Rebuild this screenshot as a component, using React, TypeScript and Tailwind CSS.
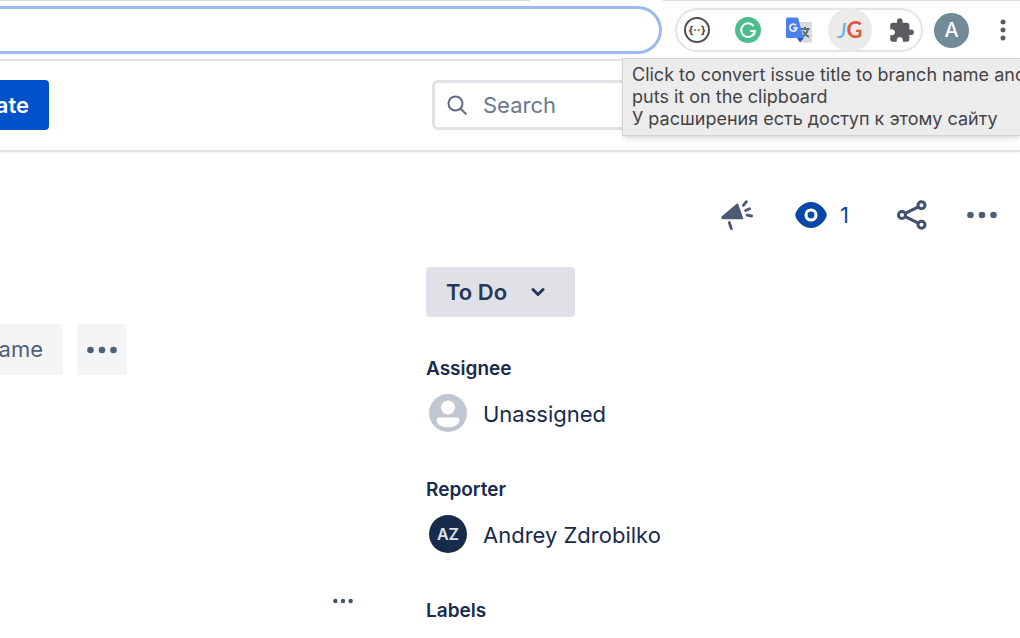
import React from 'react';
import { MdExtension } from 'react-icons/md';

const GrammarIcon = () => (
  <svg viewBox="0 0 26 26" className="h-[26px] w-[26px]" fill="none">
    <circle cx="13" cy="13" r="13" fill="#4cbd8e" />
    <path d="M18.6 9.2A6.8 6.8 0 1 0 19.8 14h-4.6" stroke="#fff" strokeWidth="2" />
    <path d="M19.4 13.6v4.6" stroke="#fff" strokeWidth="1.6" />
  </svg>
);

const TranslateIcon = () => (
  <svg viewBox="0 0 26 26" className="h-[26px] w-[26px]" fill="none">
    <path d="M10 5h16v20.500H15z" fill="#d9dadb" />
    <path d="M14.500 12h9M19 10v2M22 12c-.8 3.500-3 6-6 8M17 14c1.200 2.500 3 4.500 6 6" stroke="#5c7080" strokeWidth="2" />
    <path d="M11 21h7l-4 4.500z" fill="#3a53b5" />
    <path d="M1.500.5H12l5.500 20.500h-16A1.500 1.500 0 0 1 0 19.500V2A1.500 1.500 0 0 1 1.500.5z" fill="#4a80e8" />
    <path d="M10 8.400A3.500 3.500 0 1 0 10.800 11H7.500" stroke="#e4edfc" strokeWidth="1.800" />
  </svg>
);

const MegaphoneIcon = () => (
  <svg viewBox="0 0 32 32" className="h-8 w-8" fill="none" stroke="#4c5a76" strokeWidth="2.800" strokeLinecap="round">
    <path d="M16.500 5.200 21.500 19.500H2a1 1 0 0 1-.7-1.700z" fill="#4c5a76" stroke="#4c5a76" strokeWidth="1.500" strokeLinejoin="round" />
    <path d="m8.300 23.500 2 6M22.400 6.400l3-3.700M24.600 11.500l4-1.800M26 16.200l4.600.8" />
  </svg>
);

const EyeIcon = () => (
  <svg viewBox="0 0 32 26" className="h-[26px] w-8">
    <path d="M16 0C8.500 0 2.600 6 .6 11.200a5 5 0 0 0 0 3.600C2.600 20 8.500 26 16 26s13.400-6 15.400-11.200a5 5 0 0 0 0-3.600C29.400 6 23.500 0 16 0z" fill="#0747a6" />
    <circle cx="16" cy="13" r="5" fill="#0747a6" stroke="#fff" strokeWidth="3.200" />
  </svg>
);

const ShareIcon = () => (
  <svg viewBox="0 0 30 30" className="h-[30px] w-[30px]" fill="none" stroke="#42526e" strokeWidth="3">
    <circle cx="5" cy="15" r="3.500" />
    <circle cx="24.500" cy="5.200" r="3.500" />
    <circle cx="24.500" cy="24.800" r="3.500" />
    <path d="m8.200 13.400 13.200-6.600M8.200 16.600l13.200 6.600" />
  </svg>
);

const DotsIcon = ({ className }: { className: string }) => (
  <svg viewBox="0 0 30 8" className={className} fill="currentColor">
    <circle cx="3.500" cy="4" r="3.300" />
    <circle cx="15" cy="4" r="3.300" />
    <circle cx="26.500" cy="4" r="3.300" />
  </svg>
);

const PersonIcon = () => (
  <svg viewBox="0 0 38 38" className="h-[38px] w-[38px]">
    <circle cx="19" cy="19" r="19" fill="#c1c7d0" />
    <circle cx="19" cy="13.500" r="7" fill="#fff" />
    <path d="M7.500 26a2.500 2.500 0 0 1 2.500-2.500h18a2.500 2.500 0 0 1 2.500 2.500c0 4-5 7.300-11.500 7.300S7.500 30 7.500 26z" fill="#fff" />
  </svg>
);

const extensions = [
  {
    name: 'JSON viewer',
    icon: (
      <span className="flex h-[26px] w-[26px] items-center justify-center rounded-full border-2 border-[#505050] text-[11px] leading-none font-bold text-[#444]">
        {'{··}'}
      </span>
    ),
  },
  { name: 'Grammar', icon: <GrammarIcon /> },
  { name: 'Translate', icon: <TranslateIcon /> },
  {
    name: 'Branch name',
    active: true,
    icon: (
      <span className="flex items-center text-[22px] leading-none">
        <span className="font-[Lato] text-[#62b0e8] italic">J</span>
        <span className="font-[Lato] font-bold text-[#e2583e]">G</span>
      </span>
    ),
  },
  { name: 'Extensions', icon: <MdExtension size={27} color="#5a5c62" /> },
];

const BrowserBar = () => (
  <div className="relative">
    {/* Bottom edge of the tab strip */}
    <div className="flex h-px justify-between">
      <div className="w-[52%] bg-[#dcdce0]" />
      <div className="w-[35%] bg-[#dcdce0]" />
    </div>

    <div className="flex h-[60px] items-center border-b-2 border-[#e2e2e5] pr-[5px]">
      <input
        aria-label="Address"
        className="h-12 min-w-0 flex-1 rounded-r-full border-y-[3px] border-r-[3px] border-[#9cb9f0] bg-white px-4 outline-none"
      />
      <div className="ml-[13px] flex h-11 gap-[7px] rounded-full ring-2 ring-[#e4e4e6] ring-inset">
        {extensions.map((ext) => (
          <button
            key={ext.name}
            aria-label={ext.name}
            className={`flex h-11 w-11 items-center justify-center rounded-full ${ext.active ? 'bg-[#ebebec]' : ''}`}
          >
            {ext.icon}
          </button>
        ))}
      </div>
      <button className="ml-[11px] h-[35px] w-[35px] rounded-full bg-[#718b97] text-xl font-medium text-white">A</button>
      <button aria-label="Menu" className="ml-[22px] flex w-6 justify-center text-[#5a5c62]">
        <svg viewBox="0 0 6 22" className="h-[22px] w-[6px]" fill="currentColor">
          <circle cx="3" cy="3" r="2.500" />
          <circle cx="3" cy="11" r="2.500" />
          <circle cx="3" cy="19" r="2.500" />
        </svg>
      </button>
    </div>

    <div
      role="tooltip"
      className="absolute top-[58px] right-0 w-[398px] overflow-hidden border border-r-0 border-[#d4d4d6] bg-[#ececed] py-[5px] pl-[9px] text-lg leading-[22px] whitespace-nowrap text-[#444] shadow-md"
    >
      <p>Click to convert issue title to branch name and</p>
      <p>puts it on the clipboard</p>
      <p>У расширения есть доступ к этому сайту</p>
    </div>
  </div>
);

const Header = () => (
  <header className="flex items-center justify-between border-b-2 border-[#dfe1e6] pt-[19px] pr-6 pb-5 shadow-xs">
    <div className="flex w-[49px] justify-end overflow-hidden rounded-r">
      <button className="h-[50px] shrink-0 bg-[#0052cc] px-5 text-[22px] font-semibold text-white">Create</button>
    </div>
    <label className="flex h-[50px] w-[564px] items-center gap-4 rounded-md border-[3px] border-[#dfe1e6] bg-white pl-3">
      <svg viewBox="0 0 20 20" className="h-5 w-5" fill="none" stroke="#5e6c84" strokeWidth="2" strokeLinecap="round">
        <circle cx="8.500" cy="8.500" r="7" />
        <path d="m13.700 13.700 5 5" />
      </svg>
      <input
        aria-label="Search"
        placeholder="Search"
        className="min-w-0 flex-1 text-[22px] outline-none placeholder:text-[#6b778c]"
      />
    </label>
  </header>
);

const Field = ({ label, children }: { label: string; children?: React.ReactNode }) => (
  <div>
    <dt className="text-[19px] leading-6 font-semibold">{label}</dt>
    {children && <dd className="mt-[13px] flex h-[38px] items-center gap-4 pl-[3px] text-[22px]">{children}</dd>}
  </div>
);

const App: React.FC = () => {
  return (
    <div className="min-h-screen overflow-hidden bg-white font-[Inter,sans-serif] text-[#172b4d]">
      <BrowserBar />
      <Header />

      <main className="grid grid-cols-[minmax(0,426fr)_minmax(0,594fr)]">
        <section className="overflow-hidden pt-[172px]">
          <div className="flex gap-[14px]">
            <div className="flex w-[63px] justify-end overflow-hidden">
              <button className="h-[51px] shrink-0 bg-[#f4f5f7] px-5 text-[22px] text-[#505f79]">Rename</button>
            </div>
            <button aria-label="More options" className="flex h-[51px] w-[50px] items-center justify-center bg-[#f4f5f7] text-[#505f79]">
              <DotsIcon className="h-2 w-[30px]" />
            </button>
          </div>
          <div className="mt-[216px] flex justify-end pr-[73px]">
            <button aria-label="More actions" className="flex h-5 items-center text-[#42526e]">
              <DotsIcon className="h-[6px] w-5" />
            </button>
          </div>
        </section>

        <section className="pt-[47px]">
          <div className="flex h-8 items-center justify-end pr-[23px]">
            <button aria-label="Give feedback">
              <MegaphoneIcon />
            </button>
            <button aria-label="Watchers" className="ml-[42px] flex items-center gap-[13px] text-[22px] text-[#0747a6]">
              <EyeIcon />
              <span>1</span>
            </button>
            <button aria-label="Share" className="ml-12">
              <ShareIcon />
            </button>
            <button aria-label="Actions" className="ml-10 text-[#505f79]">
              <DotsIcon className="h-2 w-[30px]" />
            </button>
          </div>

          <button className="mt-9 flex h-[50px] w-[149px] items-center gap-6 rounded-sm bg-[#dfe1e6] pl-5 text-[22px] font-semibold text-[#253858]">
            To Do
            <svg viewBox="0 0 14 10" className="h-[10px] w-[14px]" fill="none" stroke="#253858" strokeWidth="3" strokeLinecap="round" strokeLinejoin="round">
              <path d="m2 2.500 5 5 5-5" />
            </svg>
          </button>

          <dl className="mt-10 flex flex-col gap-[46px]">
            <Field label="Assignee">
              <PersonIcon />
              <span className="pt-[3px]">Unassigned</span>
            </Field>
            <Field label="Reporter">
              <span className="flex h-[38px] w-[38px] items-center justify-center rounded-full bg-[#172b4d] text-base font-semibold text-[#dfe1e6]">
                AZ
              </span>
              <span className="pt-[3px]">Andrey Zdrobilko</span>
            </Field>
            <Field label="Labels" />
          </dl>
        </section>
      </main>
    </div>
  );
};

export default App;
